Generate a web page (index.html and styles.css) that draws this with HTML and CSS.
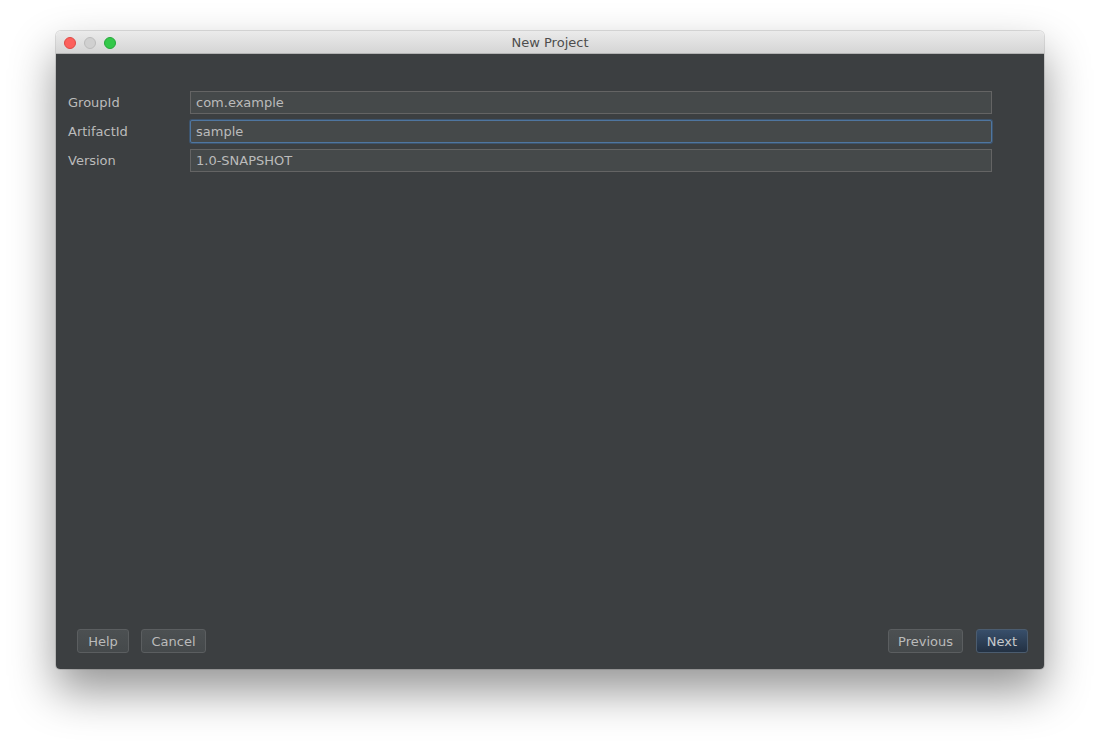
FILE: index.html
```html
<!DOCTYPE html>
<html>
<head>
<meta charset="utf-8">
<title>New Project</title>
<link rel="stylesheet" href="styles.css">
</head>
<body>
<div class="window">
  <div class="titlebar">
    <div class="lights">
      <span class="light red"></span>
      <span class="light gray"></span>
      <span class="light green"></span>
    </div>
    <div class="title">New Project</div>
  </div>
  <div class="content">
    <div class="form">
      <div class="row">
        <label class="label">GroupId</label>
        <div class="field">com.example</div>
      </div>
      <div class="row">
        <label class="label">ArtifactId</label>
        <div class="field focused">sample</div>
      </div>
      <div class="row">
        <label class="label">Version</label>
        <div class="field">1.0-SNAPSHOT</div>
      </div>
    </div>
    <div class="buttons">
      <div class="group">
        <button class="btn w-help">Help</button>
        <button class="btn w-cancel">Cancel</button>
      </div>
      <div class="group">
        <button class="btn w-prev">Previous</button>
        <button class="btn primary w-next">Next</button>
      </div>
    </div>
  </div>
</div>
</body>
</html>
```

FILE: styles.css
```css
html, body {
  margin: 0;
  padding: 0;
  background: #ffffff;
}
body {
  width: 1100px;
  height: 750px;
  overflow: hidden;
  font-family: "DejaVu Sans", "Liberation Sans", sans-serif;
  font-size: 13px;
}
.window {
  margin: 31px 0 0 56px;
  width: 988px;
  height: 638px;
  display: flex;
  flex-direction: column;
  border-radius: 5px 5px 4px 4px;
  overflow: hidden;
  box-shadow: 0 22px 45px rgba(0, 0, 0, 0.42), 0 0 0 1px rgba(0, 0, 0, 0.12);
}
.titlebar {
  height: 23px;
  flex: none;
  display: flex;
  align-items: center;
  position: relative;
  background: linear-gradient(#ebebeb, #d5d5d5);
  border-bottom: 1px solid #b3b3b3;
  box-sizing: border-box;
}
.lights {
  display: flex;
  gap: 8px;
  padding-left: 8px;
  padding-top: 1px;
  position: relative;
  z-index: 1;
}
.light {
  width: 12px;
  height: 12px;
  border-radius: 50%;
  box-sizing: border-box;
}
.red { background: #fc605c; border: 1px solid #de4a45; }
.gray { background: #d0d0d0; border: 1px solid #bcbcbc; }
.green { background: #34c84a; border: 1px solid #25a83a; }
.title {
  position: absolute;
  left: 0;
  right: 0;
  top: 1px;
  text-align: center;
  color: #4d4d4d;
  font-size: 13px;
  line-height: 22px;
}
.content {
  flex: 1;
  background: #3c3f41;
  display: flex;
  flex-direction: column;
  padding: 37px 52px 16px 12px;
  color: #bbbbbb;
}
.form {
  display: flex;
  flex-direction: column;
  gap: 6px;
}
.row {
  display: flex;
  align-items: center;
  height: 23px;
}
.label {
  width: 122px;
  flex: none;
  color: #bbbbbb;
}
.field {
  flex: 1;
  height: 23px;
  box-sizing: border-box;
  background: #45494a;
  border: 1px solid #646464;
  padding: 0 5px;
  line-height: 21px;
  color: #bbbbbb;
}
.field.focused {
  border: 1px solid #4f76a0;
  border-radius: 2px;
  box-shadow: 0 0 0 1px rgba(62, 98, 138, 0.6);
}
.buttons {
  margin-top: auto;
  margin-right: -36px;
  padding-left: 9px;
  display: flex;
  justify-content: space-between;
}
.group {
  display: flex;
  gap: 12px;
}
.group + .group { gap: 13px; }
.btn {
  height: 24px;
  box-sizing: border-box;
  border: 1px solid #5b5e60;
  border-radius: 3px;
  background: linear-gradient(#4c5052, #45494b);
  color: #bbbbbb;
  font-family: "DejaVu Sans", "Liberation Sans", sans-serif;
  font-size: 13px;
  padding: 0;
  text-align: center;
}
.btn.primary {
  background: linear-gradient(#384f6b, #233143);
  border-color: #4b5c6f;
  color: #c6c9cc;
}
.w-help { width: 52px; }
.w-cancel { width: 65px; }
.w-prev { width: 75px; }
.w-next { width: 52px; }
```
